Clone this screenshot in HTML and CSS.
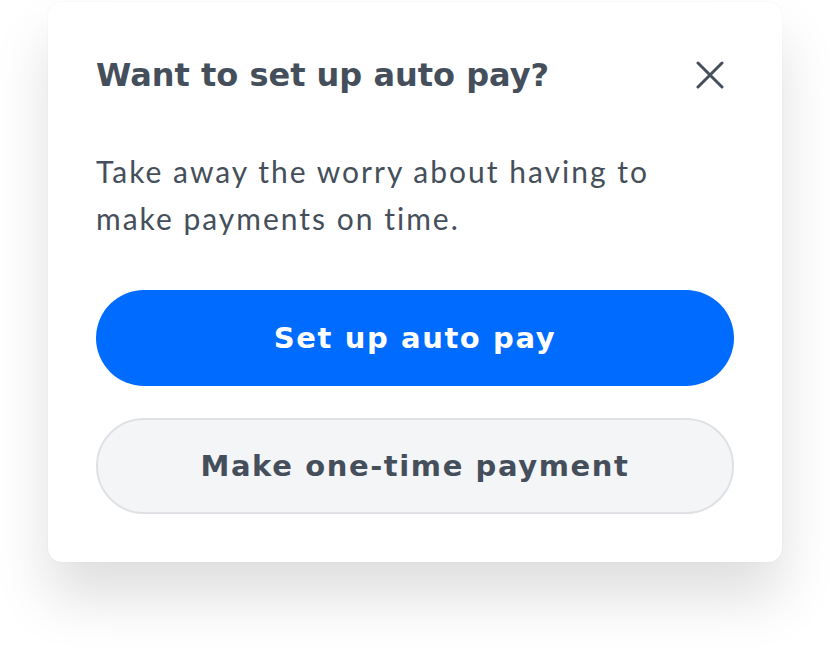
FILE: index.html
```html
<!DOCTYPE html>
<html lang="en">
<head>
    <meta charset="UTF-8">
    <meta name="viewport" content="width=device-width, initial-scale=1.0">
    <title>Auto pay</title>
    <link rel="stylesheet" href="styles.css">
</head>
<body>
    <div class="card">
        <div class="card-header">
            <h2 class="title">Want to set up auto pay?</h2>
            <button class="close" aria-label="Close">
                <svg width="28" height="28" viewBox="0 0 28 28">
                    <path d="M2 2 L26 26 M26 2 L2 26" stroke="#454f5b" stroke-width="3" stroke-linecap="round" fill="none"/>
                </svg>
            </button>
        </div>
        <p class="message">Take away the worry about having to make payments on time.</p>
        <div class="actions">
            <button class="btn btn-primary">Set up auto pay</button>
            <button class="btn btn-secondary">Make one-time payment</button>
        </div>
    </div>
</body>
</html>
```

FILE: styles.css
```css
html, body {
    min-height: 658px;
}

body {
    margin: 0;
    padding: 0;
    background-color: #ffffff;
    font-family: Lato, "Open Sans", sans-serif;
}

.card {
    width: 734px;
    box-sizing: border-box;
    margin: 2px 0 0 48px;
    padding: 48px;
    background: white;
    border-radius: 14px;
    box-shadow: 0 0 2px rgba(0, 0, 0, 0.06), 0 36px 56px rgba(0, 0, 0, 0.13);
}

.card-header {
    display: flex;
    justify-content: space-between;
    align-items: center;
    height: 50px;
}

.title {
    margin: 0;
    font-family: "DejaVu Sans", sans-serif;
    font-size: 32px;
    font-weight: 700;
    color: #454f5b;
}

.close {
    display: flex;
    padding: 0;
    margin-right: 10px;
    border: none;
    background: none;
    cursor: pointer;
}

.message {
    margin: 48px 0 0;
    font-size: 30px;
    line-height: 47px;
    letter-spacing: 2px;
    color: #454f5b;
}

.actions {
    display: flex;
    flex-direction: column;
    gap: 32px;
    margin-top: 48px;
}

.btn {
    height: 96px;
    border-radius: 48px;
    font-family: "DejaVu Sans", sans-serif;
    font-size: 29px;
    font-weight: 700;
    letter-spacing: 1.6px;
    cursor: pointer;
}

.btn-primary {
    border: none;
    background-color: #006bff;
    color: white;
}

.btn-secondary {
    border: 2px solid #dfe1e5;
    background-color: #f4f5f7;
    color: #454f5b;
}
```
